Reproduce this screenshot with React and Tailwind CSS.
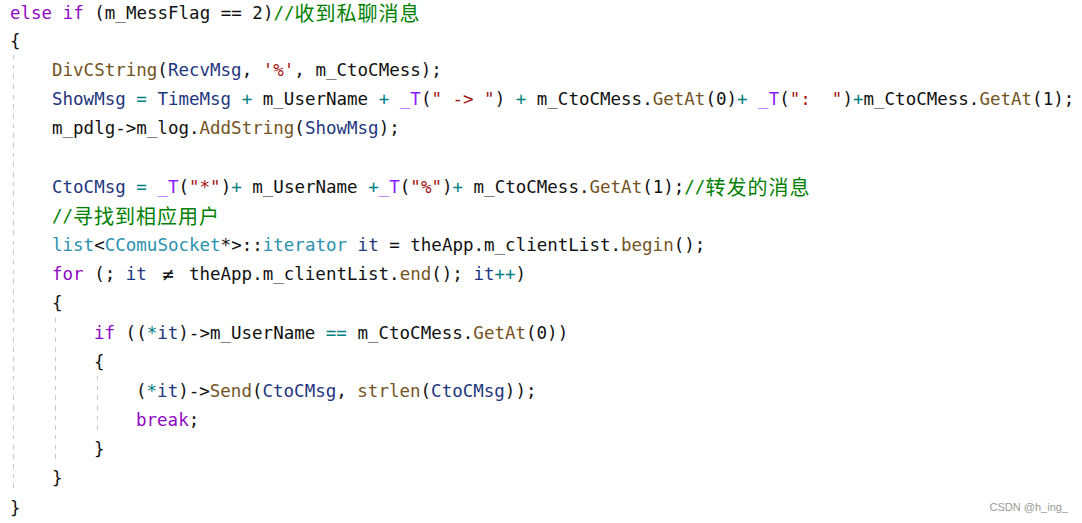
const C = {
  k: 'text-[#8f08c4]',
  f: 'text-[#74531f]',
  v: 'text-[#1f377f]',
  s: 'text-[#a31515]',
  t: 'text-[#2b91af]',
  c: 'text-[#008000] font-["Noto_Sans_CJK_SC",sans-serif] text-[20px] leading-none tracking-[1px]',
  m: 'text-[#8a1bff]',
  o: 'text-[#008080]',
  p: 'text-[#111111]',
};

// each line: [guides, indent levels, tokens]
const lines = [
  [0, 0, [['else if', 'k'], [' (m_MessFlag == 2)', 'p'], ['//', 'cs'], ['收到私聊消息', 'c']]],
  [0, 0, [['{', 'p']]],
  [1, 1, [['DivCString', 'f'], ['(', 'p'], ['RecvMsg', 'v'], [', ', 'p'], ["'%'", 's'], [', m_CtoCMess);', 'p']]],
  [1, 1, [['ShowMsg', 'v'], [' ', 'p'], ['=', 'o'], [' ', 'p'], ['TimeMsg', 'v'], [' ', 'p'], ['+', 'o'], [' m_UserName ', 'p'], ['+', 'o'], [' ', 'p'], ['_T', 'm'], ['(', 'p'], ['" -> "', 's'], [') ', 'p'], ['+', 'o'], [' m_CtoCMess.', 'p'], ['GetAt', 'f'], ['(0)', 'p'], ['+', 'o'], [' ', 'p'], ['_T', 'm'], ['(', 'p'], ['":  "', 's'], [')', 'p'], ['+', 'o'], ['m_CtoCMess.', 'p'], ['GetAt', 'f'], ['(1);', 'p']]],
  [1, 1, [['m_pdlg->m_log.', 'p'], ['AddString', 'f'], ['(', 'p'], ['ShowMsg', 'v'], [');', 'p']]],
  [1, 1, []],
  [1, 1, [['CtoCMsg', 'v'], [' ', 'p'], ['=', 'o'], [' ', 'p'], ['_T', 'm'], ['(', 'p'], ['"*"', 's'], [')', 'p'], ['+', 'o'], [' m_UserName ', 'p'], ['+', 'o'], ['_T', 'm'], ['(', 'p'], ['"%"', 's'], [')', 'p'], ['+', 'o'], [' m_CtoCMess.', 'p'], ['GetAt', 'f'], ['(1);', 'p'], ['//', 'cs'], ['转发的消息', 'c']]],
  [1, 1, [['//', 'cs'], ['寻找到相应用户', 'c']]],
  [1, 1, [['list', 't'], ['<', 'p'], ['CComuSocket', 't'], ['*>::', 'p'], ['iterator', 't'], [' ', 'p'], ['it', 'v'], [' = theApp.m_clientList.', 'p'], ['begin', 'f'], ['();', 'p']]],
  [1, 1, [['for', 'k'], [' (; ', 'p'], ['it', 'v'], [' ', 'p'], ['≠', 'ne'], [' theApp.m_clientList.', 'p'], ['end', 'f'], ['(); ', 'p'], ['it', 'v'], ['++', 'o'], [')', 'p']]],
  [1, 1, [['{', 'p']]],
  [2, 2, [['if', 'k'], [' ((', 'p'], ['*', 'o'], ['it', 'v'], [')->m_UserName ', 'p'], ['==', 'o'], [' m_CtoCMess.', 'p'], ['GetAt', 'f'], ['(0))', 'p']]],
  [2, 2, [['{', 'p']]],
  [3, 3, [['(', 'p'], ['*', 'o'], ['it', 'v'], [')->', 'p'], ['Send', 'f'], ['(', 'p'], ['CtoCMsg', 'v'], [', ', 'p'], ['strlen', 'f'], ['(', 'p'], ['CtoCMsg', 'v'], ['));', 'p']]],
  [3, 3, [['break', 'k'], [';', 'p']]],
  [2, 2, [['}', 'p']]],
  [1, 1, [['}', 'p']]],
  [0, 0, [['}', 'p']]],
];

function Token({ text, kind }) {
  if (kind === 'ne') {
    return <span className="inline-block w-[21px] text-center text-[19px] text-[#111111]">{text}</span>;
  }
  if (kind === 'cs') {
    return <span className="text-[#008000]">{text}</span>;
  }
  return <span className={C[kind]}>{text}</span>;
}

function Indent({ guide }) {
  return (
    <span className="w-[42px] shrink-0 self-stretch pl-[3px]">
      {guide && (
        <span className="block w-px h-full bg-[repeating-linear-gradient(to_bottom,#c9c9c9_0px,#c9c9c9_4.5px,transparent_4.5px,transparent_9.73px)]" />
      )}
    </span>
  );
}

export default function App() {
  return (
    <div className="relative w-[1082px] h-[523px] overflow-hidden bg-white">
      <div className="pl-[10px] font-['DejaVu_Sans_Mono',monospace] text-[17.5px] text-[#111111]">
        {lines.map(([guides, indent, tokens], i) => (
          <div key={i} className="flex h-[29.2px] first:h-[26.2px] items-center whitespace-pre">
            {Array.from({ length: indent }).map((_, j) => (
              <Indent key={j} guide={j < guides} />
            ))}
            {tokens.map(([text, kind], j) => (
              <Token key={j} text={text} kind={kind} />
            ))}
          </div>
        ))}
      </div>
      <div className="absolute right-[14px] bottom-[8px] font-['Liberation_Sans',sans-serif] text-[11px] text-[#9a9a9a]">
        CSDN @h_ing_
      </div>
    </div>
  );
}
